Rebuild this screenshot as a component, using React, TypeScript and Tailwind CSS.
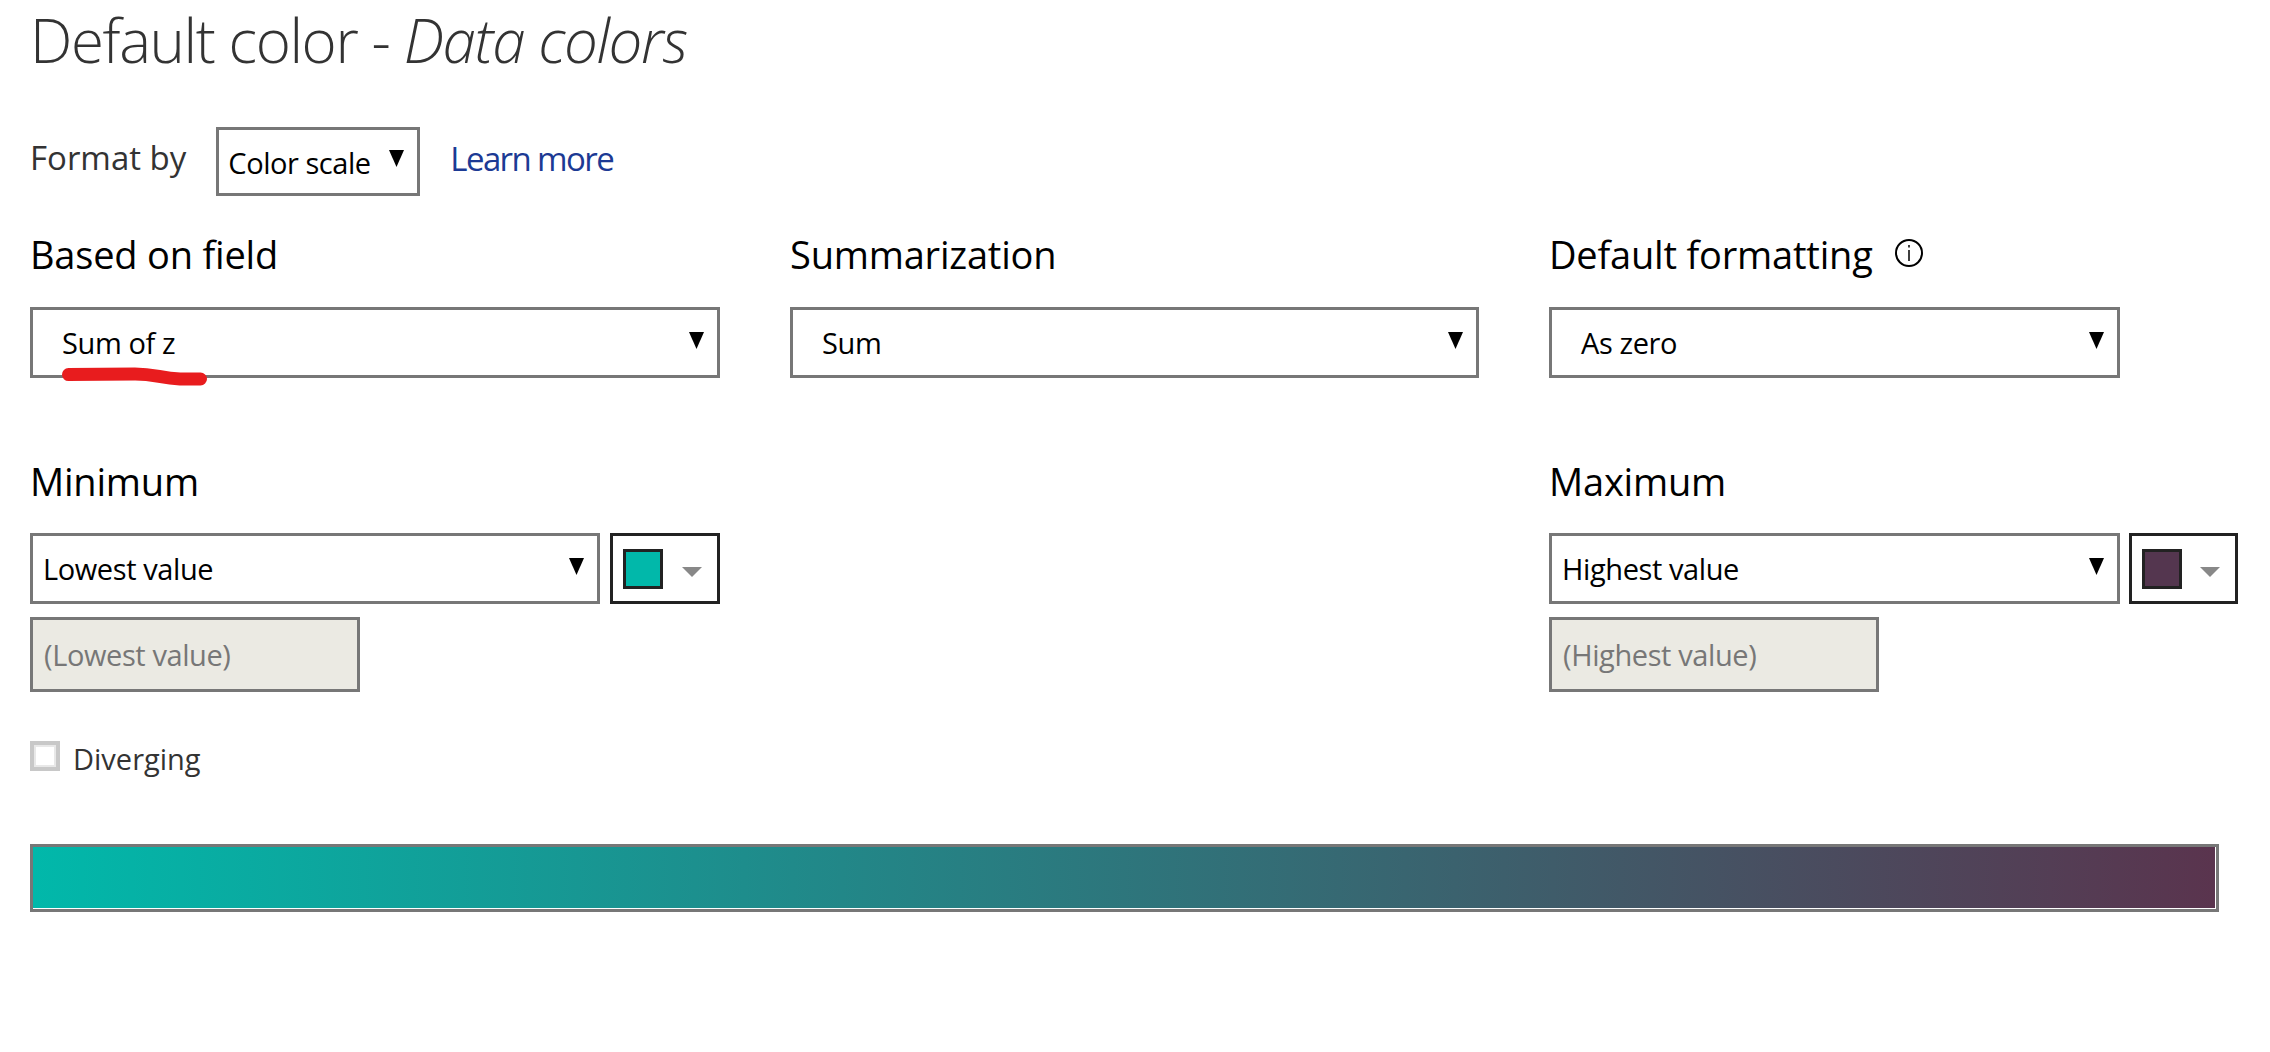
const font = { fontFamily: '"Open Sans", "Noto Sans", sans-serif' };

function Tri({ className = "" }: { className?: string }) {
  return (
    <svg className={className} width="15" height="17" viewBox="0 0 15 17">
      <path d="M0 0H15L7.5 17Z" fill="#000" />
    </svg>
  );
}

function Select({ label, indent, width }: { label: string; indent: string; width: string }) {
  return (
    <div className={`flex h-[71px] items-center justify-between border-[3px] border-[#777777] bg-white pr-[13px] ${indent} ${width}`}>
      <span className="text-[29px] tracking-[-0.4px] text-black">{label}</span>
      <Tri className="mb-[4px]" />
    </div>
  );
}

function Swatch({ color, width }: { color: string; width: string }) {
  return (
    <div className={`flex h-[71px] items-center justify-between border-[3px] border-[#222222] bg-white pl-[10px] pr-[15px] ${width}`}>
      <div className={`h-[40px] w-[40px] border-[3px] border-[#222222] ${color}`} />
      <svg width="20" height="10" viewBox="0 0 20 10" className="mt-[6px]">
        <path d="M0 0H20L10 10Z" fill="#888888" />
      </svg>
    </div>
  );
}

function Disabled({ label, width }: { label: string; width: string }) {
  return (
    <div className={`mt-[13px] flex h-[75px] items-center border-[3px] border-[#777777] bg-[#EBEAE3] pl-[11px] ${width}`}>
      <span className="text-[29px] tracking-[-0.4px] text-[#777777]">{label}</span>
    </div>
  );
}

const heading = "h-[54px] text-[38px] leading-[50px] tracking-[-0.2px] text-black";

export default function App() {
  return (
    <div className="relative h-[1052px] w-[2270px] overflow-hidden bg-white pl-[30px]" style={font}>
      <h1 className="h-[85px] pt-[1px] text-[60px] font-light leading-[78px] tracking-[-1.4px] text-[#333333]">
        Default color - <em>Data colors</em>
      </h1>

      <div className="mt-[42px] flex h-[69px] items-start">
        <span className="mt-[9px] text-[33px] leading-[44px] text-[#333333]">Format by</span>
        <div className="ml-[30px] flex h-[69px] w-[204px] items-center justify-between border-[3px] border-[#777777] pl-[9px] pr-[13px]">
          <span className="mt-[2px] text-[29px] tracking-[-0.45px] text-black">Color scale</span>
          <Tri className="mb-[6px]" />
        </div>
        <a className="ml-[30px] mt-[10px] text-[33px] leading-[44px] tracking-[-1.6px] text-[#1C3A94]">Learn more</a>
      </div>

      <div className="mt-[33px] grid w-[2208px] grid-cols-[690px_689px_689px] gap-x-[70px]">
        <div>
          <div className={heading}>Based on field</div>
          <div className="relative mt-[24px]">
            <Select label="Sum of z" indent="pl-[29px]" width="w-full" />
            <svg className="absolute left-[30px] top-[60px]" width="150" height="20" viewBox="0 0 150 20">
              <path d="M8.5 7.5L75 7C95 7 100 11 120 12L140.5 12" fill="none" stroke="#E81C1E" strokeWidth="13" strokeLinecap="round" />
            </svg>
          </div>
        </div>
        <div>
          <div className={heading}>Summarization</div>
          <div className="mt-[24px]">
            <Select label="Sum" indent="pl-[29px]" width="w-full" />
          </div>
        </div>
        <div>
          <div className={`flex items-start ${heading}`}>
            <span>Default formatting</span>
            <svg className="ml-[21px] mt-[9px]" width="30" height="30" viewBox="0 0 30 30">
              <circle cx="15" cy="15" r="13" fill="none" stroke="#000" strokeWidth="2" />
              <path d="M15 12V23M15 7V9.5" stroke="#000" strokeWidth="1.5" />
            </svg>
          </div>
          <div className="mt-[24px]">
            <Select label="As zero" indent="pl-[29px]" width="w-[571px]" />
          </div>
        </div>
      </div>

      <div className="mt-[78px] grid w-[2208px] grid-cols-[690px_689px_689px] gap-x-[70px]">
        <div>
          <div className={heading}>Minimum</div>
          <div className="mt-[23px] flex justify-between">
            <Select label="Lowest value" indent="pl-[10px]" width="w-[570px]" />
            <Swatch color="bg-[#01B8AA]" width="w-[110px]" />
          </div>
          <Disabled label="(Lowest value)" width="w-[330px]" />
        </div>
        <div />
        <div>
          <div className={heading}>Maximum</div>
          <div className="mt-[23px] flex justify-between">
            <Select label="Highest value" indent="pl-[10px]" width="w-[571px]" />
            <Swatch color="bg-[#54364F]" width="w-[109px]" />
          </div>
          <Disabled label="(Highest value)" width="w-[330px]" />
        </div>
      </div>

      <div className="mt-[52px] flex h-[30px] items-center">
        <div className="mb-[6px] h-[30px] w-[30px] border-[4px] border-[#C8C8C8] bg-white">
          <div className="h-full w-full border-2 border-[#E8E8E8]" />
        </div>
        <span className="ml-[13px] text-[29px] text-[#333333]">Diverging</span>
      </div>

      <div className="mt-[70px] h-[68px] w-[2189px] border-[3px] border-[#777777] bg-white pb-px pr-px">
        <div className="h-full w-full bg-linear-to-r/srgb from-[#01B8AA] to-[#5A344E]" />
      </div>
    </div>
  );
}
